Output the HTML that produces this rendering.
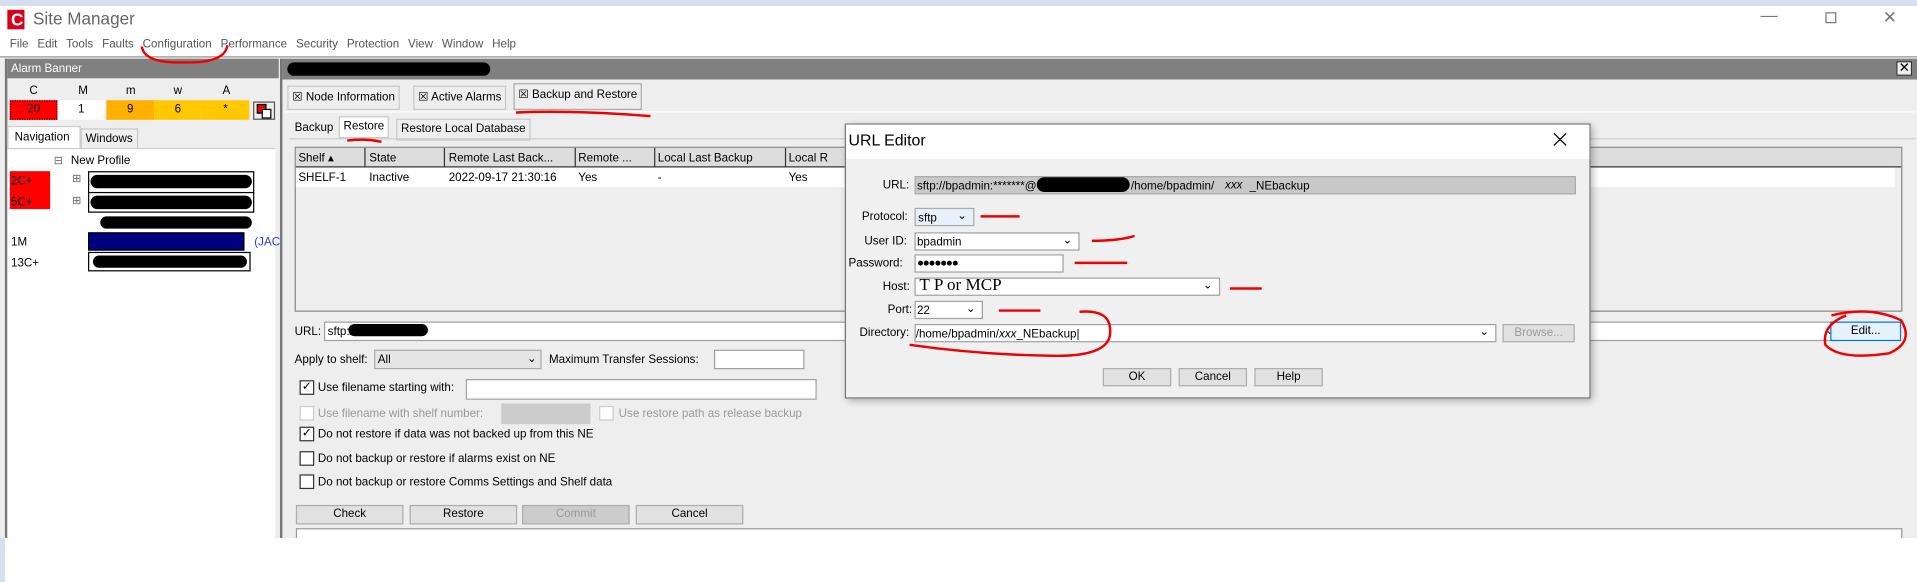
<!DOCTYPE html>
<html><head><meta charset="utf-8"><style>
*{box-sizing:border-box;margin:0;padding:0}
html,body{width:1917px;height:582px;overflow:hidden;background:#fff}
#w{position:absolute;left:0;top:0;width:1568px;height:476px;transform:scale(1.2226);transform-origin:0 0;font-family:"Liberation Sans",Arial,sans-serif;font-size:9.5px;color:#000}
.a{position:absolute}
.t{position:absolute;white-space:nowrap}
.box{position:absolute;background:#fff;border:1px solid #a0a0a0}
.btn{position:absolute;background:#e1e1e1;border:1px solid #adadad;text-align:center;line-height:13px}
.cb{position:absolute;width:12px;height:12px;border:1px solid #333;background:#fff;font-size:10px}
.tab{position:absolute;border:1px solid #c8c8c8;background:#eee;padding:0 3px;line-height:16px}
.blob{position:absolute;background:#000;border-radius:6px}
.al{position:absolute;top:82px;height:16px;text-align:center;line-height:16px;width:39px}
</style></head><body><div id="w">
<div class="a" style="left:0;top:0;width:1568px;height:5px;background:#d6dff0"></div>
<div class="a" style="left:0;top:5px;width:1568px;height:41px;background:#fff"></div>
<div class="a" style="left:6px;top:8px;width:14px;height:16px;background:#d6001c"></div>
<div class="t" style="left:9px;top:8px;color:#fff;font-weight:bold;font-size:14px">C</div>
<div class="t" style="left:27px;top:7px;font-size:14px;color:#666">Site Manager</div>
<div class="t" style="left:1440px;top:4px;font-size:14px;color:#777">—</div>
<div class="a" style="left:1493px;top:10px;width:9px;height:9px;border:1px solid #777"></div>
<div class="t" style="left:1540px;top:6px;font-size:14px;color:#777">✕</div>
<div class="t" style="left:8px;top:31px;color:#555;word-spacing:1px">File&nbsp; Edit&nbsp; Tools&nbsp; Faults&nbsp; Configuration&nbsp; Performance&nbsp; Security&nbsp; Protection&nbsp; View&nbsp; Window&nbsp; Help</div>
<div class="a" style="left:0;top:46px;width:1568px;height:394px;background:#eee;border-top:1px solid #999"></div>
<!-- left panel -->
<div class="a" style="left:4px;top:48px;width:224px;height:392px;background:#eee;border-left:2px solid #777"></div>
<div class="a" style="left:6px;top:48px;width:222px;height:16px;background:#808080"></div>
<div class="t" style="left:9px;top:51px;color:#fff">Alarm Banner</div>
<div class="t" style="left:24px;top:69px">C</div><div class="t" style="left:64px;top:69px">M</div><div class="t" style="left:103px;top:69px">m</div><div class="t" style="left:142px;top:69px">w</div><div class="t" style="left:182px;top:69px">A</div>
<div class="al" style="left:8px;background:#f00;border:1px dotted #600;line-height:14px">20</div>
<div class="al" style="left:47px;background:#fff">1</div>
<div class="al" style="left:87px;background:#ffb000">9</div>
<div class="al" style="left:126px;background:#ffc800">6</div>
<div class="al" style="left:165px;background:#ffc800">*</div>
<div class="a" style="left:207px;top:83px;width:18px;height:15px;border:1px solid #555;background:#eee"></div>
<div class="a" style="left:210px;top:85px;width:8px;height:8px;background:#e00;border:1px solid #000"></div>
<div class="a" style="left:214px;top:89px;width:8px;height:8px;background:#fff;border:1px solid #000"></div>
<div class="a" style="left:6px;top:103px;width:60px;height:18px;background:#fff;border:1px solid #ccc;border-bottom:none"></div>
<div class="t" style="left:12px;top:107px">Navigation</div>
<div class="tab" style="left:66px;top:105px">Windows</div>
<div class="a" style="left:6px;top:121px;width:219px;height:319px;background:#fff;border-top:1px solid #ccc"></div>
<div class="t" style="left:44px;top:126px;font-size:9px;color:#666">⊟</div>
<div class="t" style="left:58px;top:126px">New Profile</div>
<div class="a" style="left:8px;top:140px;width:33px;height:31px;background:#f00"></div>
<div class="t" style="left:9px;top:143px">2C+</div><div class="t" style="left:9px;top:160px">5C+</div>
<div class="t" style="left:9px;top:193px">1M</div><div class="t" style="left:9px;top:210px">13C+</div>
<div class="t" style="left:59px;top:141px;font-size:9px;color:#666">⊞</div><div class="t" style="left:59px;top:159px;font-size:9px;color:#666">⊞</div>
<div class="a" style="left:72px;top:140px;width:136px;height:34px;border:1px solid #000;background:#fff"></div>
<div class="a" style="left:72px;top:157px;width:136px;height:1px;background:#000"></div>
<div class="blob" style="left:74px;top:143px;width:132px;height:11px"></div>
<div class="blob" style="left:74px;top:160px;width:132px;height:11px"></div>
<div class="blob" style="left:82px;top:177px;width:124px;height:10px"></div>
<div class="a" style="left:72px;top:190px;width:128px;height:15px;background:#000080;border:1px solid #000"></div>
<div class="t" style="left:208px;top:193px;color:#33f">(JAC</div>
<div class="a" style="left:72px;top:206px;width:133px;height:16px;border:1px solid #000;background:#fff"></div>
<div class="blob" style="left:76px;top:209px;width:126px;height:10px"></div>
<!-- right panel -->
<div class="a" style="left:229px;top:48px;width:1339px;height:392px;background:#eee;border-left:2px solid #777"></div>
<div class="a" style="left:231px;top:48px;width:1337px;height:17px;background:#808080"></div>
<div class="blob" style="left:235px;top:51px;width:166px;height:11px"></div>
<div class="a" style="left:1551px;top:50px;width:13px;height:12px;background:#eee;border:1px solid #333;text-align:center;line-height:10px;font-size:11px">✕</div>
<div class="tab" style="left:235px;top:70px;height:20px;line-height:18px">☒ Node Information</div>
<div class="tab" style="left:338px;top:70px;height:20px;line-height:18px">☒ Active Alarms</div>
<div class="tab" style="left:420px;top:68px;height:22px;line-height:18px;background:#eee;border-color:#aaa">☒ Backup and Restore</div>
<div class="a" style="left:232px;top:91px;width:1336px;height:1px;background:#fff"></div>
<div class="t" style="left:241px;top:99px">Backup</div>
<div class="tab" style="left:277px;top:95px;background:#fff">Restore</div>
<div class="tab" style="left:324px;top:97px">Restore Local Database</div>
<div class="a" style="left:237px;top:113px;width:1330px;height:1px;background:#ccc"></div>
<div class="a" style="left:241px;top:120px;width:1315px;height:135px;border:1px solid #888;background:#eee"></div>
<div class="a" style="left:242px;top:121px;width:1313px;height:16px;background:#ddd;border-bottom:1px solid #333"></div>
<div class="a" style="left:242px;top:137px;width:1308px;height:16px;background:#fff"></div>
<div class="t" style="left:244px;top:124px">Shelf ▴</div><div class="a" style="left:298px;top:121px;width:1px;height:16px;background:#333"></div>
<div class="t" style="left:302px;top:124px">State</div><div class="a" style="left:363px;top:121px;width:1px;height:16px;background:#333"></div>
<div class="t" style="left:367px;top:124px">Remote Last Back...</div><div class="a" style="left:470px;top:121px;width:1px;height:16px;background:#333"></div>
<div class="t" style="left:473px;top:124px">Remote ...</div><div class="a" style="left:535px;top:121px;width:1px;height:16px;background:#333"></div>
<div class="t" style="left:538px;top:124px">Local Last Backup</div><div class="a" style="left:642px;top:121px;width:1px;height:16px;background:#333"></div>
<div class="t" style="left:645px;top:124px">Local R</div>
<div class="t" style="left:244px;top:140px">SHELF-1</div><div class="t" style="left:302px;top:140px">Inactive</div><div class="t" style="left:367px;top:140px">2022-09-17 21:30:16</div><div class="t" style="left:473px;top:140px">Yes</div><div class="t" style="left:538px;top:140px">-</div><div class="t" style="left:645px;top:140px">Yes</div>
<div class="t" style="left:241px;top:266px">URL:</div>
<div class="box" style="left:265px;top:263px;width:1238px;height:16px"></div>
<div class="t" style="left:268px;top:266px">sftp://</div>
<div class="blob" style="left:285px;top:265px;width:65px;height:10px"></div>
<div class="t" style="left:1493px;top:265px;font-size:9px">⌄</div>
<div class="btn" style="left:1497px;top:263px;width:58px;height:16px;background:#e5f1fb;border-color:#0078d7">Edit...</div>
<div class="t" style="left:241px;top:289px">Apply to shelf:</div>
<div class="a" style="left:306px;top:286px;width:137px;height:16px;background:#e5e5e5;border:1px solid #aaa"></div>
<div class="t" style="left:309px;top:289px">All</div><div class="t" style="left:431px;top:288px">⌄</div>
<div class="t" style="left:449px;top:289px">Maximum Transfer Sessions:</div>
<div class="box" style="left:584px;top:286px;width:74px;height:16px"></div>
<div class="cb" style="left:245px;top:311px;line-height:10px;text-align:center">✓</div>
<div class="t" style="left:260px;top:312px">Use filename starting with:</div>
<div class="box" style="left:381px;top:310px;width:287px;height:17px"></div>
<div class="cb" style="left:245px;top:332px;border-color:#ccc"></div>
<div class="t" style="left:260px;top:333px;color:#999">Use filename with shelf number:</div>
<div class="a" style="left:410px;top:330px;width:73px;height:17px;background:#ccc"></div>
<div class="cb" style="left:490px;top:332px;border-color:#ccc"></div>
<div class="t" style="left:506px;top:333px;color:#999">Use restore path as release backup</div>
<div class="cb" style="left:245px;top:349px;line-height:10px;text-align:center">✓</div>
<div class="t" style="left:260px;top:350px">Do not restore if data was not backed up from this NE</div>
<div class="cb" style="left:245px;top:369px"></div>
<div class="t" style="left:260px;top:370px">Do not backup or restore if alarms exist on NE</div>
<div class="cb" style="left:245px;top:388px"></div>
<div class="t" style="left:260px;top:389px">Do not backup or restore Comms Settings and Shelf data</div>
<div class="btn" style="left:242px;top:413px;width:88px;height:16px">Check</div>
<div class="btn" style="left:335px;top:413px;width:88px;height:16px">Restore</div>
<div class="btn" style="left:427px;top:413px;width:88px;height:16px;color:#999;background:#ccc">Commit</div>
<div class="btn" style="left:520px;top:413px;width:88px;height:16px">Cancel</div>
<div class="a" style="left:242px;top:432px;width:1314px;height:8px;background:#fff;border:1px solid #999;border-bottom:none"></div>
<div class="a" style="left:0;top:440px;width:4px;height:36px;background:#d6dff0"></div>
<!-- dialog -->
<div class="a" style="left:691px;top:101px;width:610px;height:225px;background:#f0f0f0;border:1px solid #777;box-shadow:2px 2px 6px rgba(0,0,0,.3)"></div>
<div class="a" style="left:692px;top:102px;width:608px;height:28px;background:#fff"></div>
<div class="t" style="left:694px;top:107px;font-size:13px">URL Editor</div>
<svg class="a" style="left:1270px;top:108px" width="12" height="12" stroke="#000" stroke-width="1"><path d="M1 1L11 11M11 1L1 11"/></svg>
<div class="t" style="left:722px;top:146px">URL:</div>
<div class="a" style="left:748px;top:144px;width:541px;height:15px;background:#c8c8c8;border:1px solid #aaa"></div>
<div class="t" style="left:750px;top:147px">sftp://bpadmin:*******@</div>
<div class="blob" style="left:848px;top:145px;width:76px;height:12px"></div>
<div class="t" style="left:925px;top:147px">/home/bpadmin/</div>
<div class="t" style="left:1002px;top:146px;font-style:italic">xxx</div>
<div class="t" style="left:1022px;top:147px">_NEbackup</div>
<div class="t" style="left:705px;top:172px">Protocol:</div>
<div class="a" style="left:748px;top:170px;width:49px;height:15px;background:#e5f1fb;border:1px solid #aaa"></div>
<div class="t" style="left:751px;top:173px">sftp</div><div class="t" style="left:783px;top:171px">⌄</div>
<div class="t" style="left:707px;top:192px">User ID:</div>
<div class="box" style="left:748px;top:190px;width:135px;height:15px"></div><div class="t" style="left:750px;top:193px">bpadmin</div><div class="t" style="left:869px;top:191px">⌄</div>
<div class="t" style="left:694px;top:210px">Password:</div>
<div class="box" style="left:748px;top:208px;width:122px;height:15px"></div><div class="t" style="left:750px;top:210px;font-weight:bold;letter-spacing:-1px">●●●●●●●</div>
<div class="t" style="left:722px;top:229px">Host:</div>
<div class="box" style="left:748px;top:227px;width:250px;height:15px"></div><div class="t" style="left:752px;top:226px;font-size:14px;font-family:'Liberation Serif',serif">T P or MCP</div><div class="t" style="left:984px;top:228px">⌄</div>
<div class="t" style="left:726px;top:248px">Port:</div>
<div class="box" style="left:748px;top:246px;width:56px;height:15px"></div><div class="t" style="left:750px;top:249px">22</div><div class="t" style="left:790px;top:247px">⌄</div>
<div class="t" style="left:703px;top:267px">Directory:</div>
<div class="box" style="left:748px;top:265px;width:476px;height:15px"></div><div class="t" style="left:749px;top:268px">/home/bpadmin/<i>xxx</i>_NEbackup|</div><div class="t" style="left:1210px;top:266px">⌄</div>
<div class="btn" style="left:1229px;top:265px;width:59px;height:15px;color:#999">Browse...</div>
<div class="btn" style="left:902px;top:301px;width:56px;height:15px">OK</div>
<div class="btn" style="left:964px;top:301px;width:56px;height:15px">Cancel</div>
<div class="btn" style="left:1026px;top:301px;width:56px;height:15px">Help</div>
<!-- red annotations -->
<svg class="a" style="left:0;top:0" width="1568" height="476" fill="none" stroke="#e00" stroke-width="2">
<path d="M116 38 Q118 52 150 51 Q184 52 186 37"/>
<path d="M422 92 Q470 90 532 95"/>
<path d="M284 115 Q298 113 312 116"/>
<path d="M802 177 H834"/><path d="M893 197 Q915 197 928 193"/><path d="M879 215 H922"/><path d="M1006 236 H1032"/><path d="M817 254 H851"/>
<path d="M744 282 Q800 290 860 291 Q910 292 908 270 Q908 253 883 255"/>
<path d="M1498 258 Q1530 250 1555 262 Q1566 280 1545 289 Q1505 295 1493 282 Q1490 266 1510 258"/>
</svg>
</div></body></html>
